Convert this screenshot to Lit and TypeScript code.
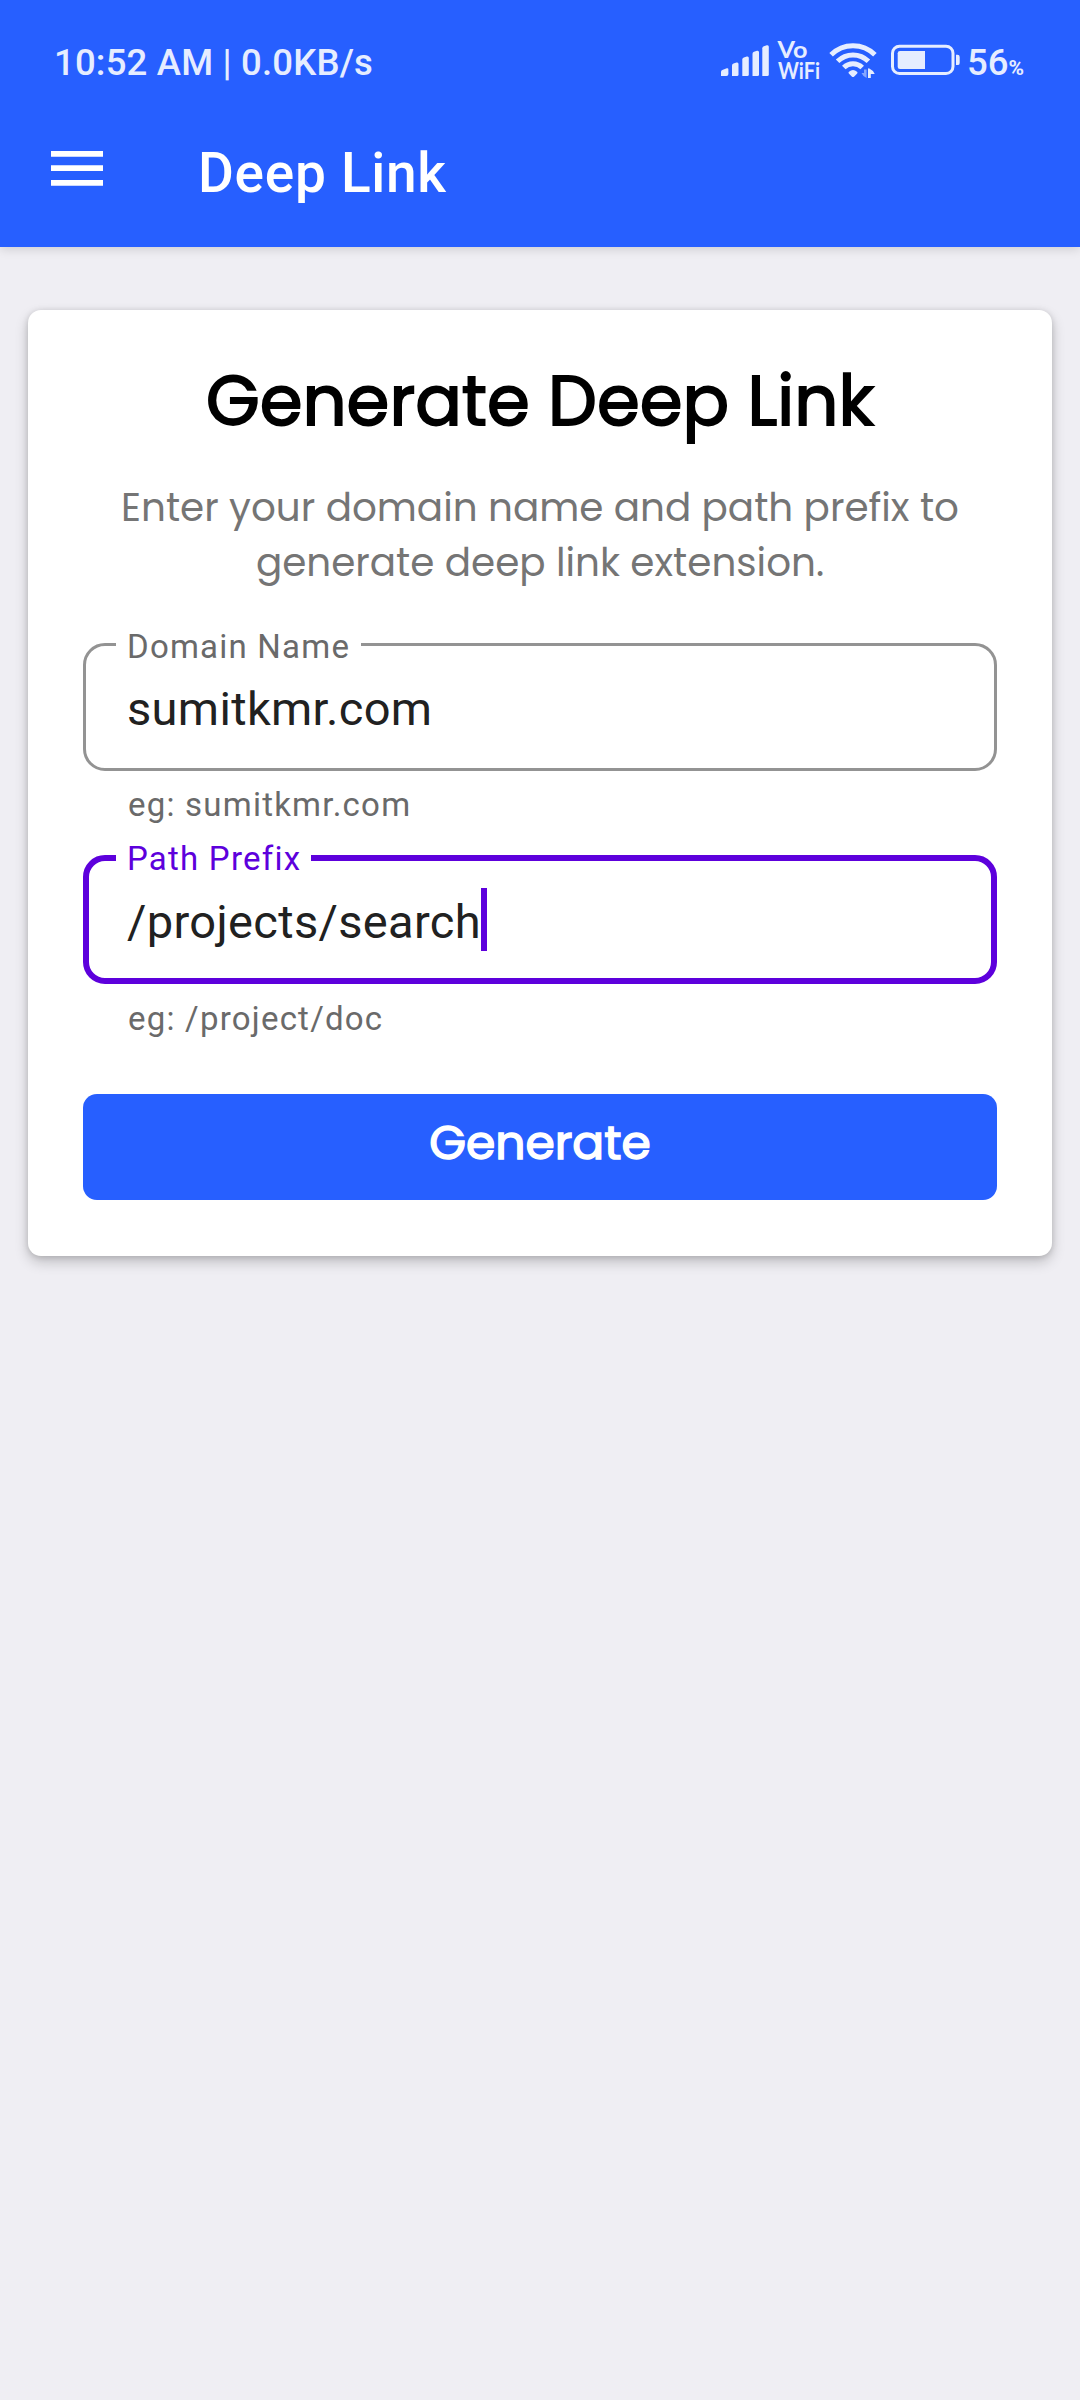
import { LitElement, html, css } from "lit";
import { customElement, property } from "lit/decorators.js";
import { classMap } from "lit/directives/class-map.js";

@customElement("status-bar")
class StatusBar extends LitElement {
  static styles = css`
    :host {
      display: flex;
      justify-content: space-between;
      height: 124px;
      padding: 0 56px 0 54px;
      color: #e6edff;
      font: 500 36.5px/125px Roboto, sans-serif;
    }
    .clock { letter-spacing: 0.18px; white-space: pre; }
    .right { display: flex; align-items: baseline; }
    .icons { display: block; align-self: flex-start; width: 247px; height: 124px; }
    .tag { font: 700 22.5px Lato, sans-serif; }
    .percent { font-size: 21px; font-weight: 700; }
  `;

  render() {
    return html`
      <span class="clock">10:52 AM | 0.0KB/s</span>
      <div class="right">
        <svg class="icons" viewBox="720 0 247 124" fill="currentColor">
          <path d="M721 76v-4q0-1.500 1.300-2l4.500-1.700q1.600-.4 1.600 1.200V74q0 2-2 2z" />
          <path d="M732 76V65.500q0-1.500 1.500-2l3-1q2-.5 2 1.500V74.500q0 1.500-1.500 1.500z" />
          <path d="M742.300 76V59.500q0-1.500 1.500-2l3-1q2-.5 2 1.500V74.500q0 1.500-1.500 1.500z" />
          <path d="M752.500 76V53.800q0-1.500 1.500-2l3-1q2-.5 2 1.500V74.500q0 1.500-1.500 1.500z" />
          <path d="M762.300 76V48.300q0-1.500 1.500-2l3-1q2-.5 2 1.500V74.500q0 1.500-1.500 1.500z" />
          <text class="tag" x="777.500" y="57.500" textLength="30" lengthAdjust="spacingAndGlyphs">Vo</text>
          <text class="tag" x="778" y="79" textLength="42" lengthAdjust="spacingAndGlyphs">WiFi</text>
          <g fill="none" stroke="currentColor" stroke-width="5">
            <path d="M831.100 54.800a31 31 0 0 1 43.800 0" />
            <path d="M837.600 61.300a21.800 21.800 0 0 1 30.800 0" />
            <path d="M843.800 67.500a13 13 0 0 1 18.400 0" />
          </g>
          <path d="M848.800 73.500q-.8-1 .2-1.700 4-3.400 8 0 1 .7.2 1.700l-3.200 3.200q-1 .8-2 0z" />
          <path opacity=".5" d="M864 69.500h2.600V78q-3.600-1.500-5.100-5h2.500z" />
          <path d="M868 78V69.300q0-1.500 1.300-.8 3.600 1.500 5.400 5.500h-3.900v4z" />
          <rect x="892.500" y="46.200" width="60.500" height="27.400" rx="7" fill="none" stroke="currentColor" stroke-width="3" />
          <path d="M900 51h25v18h-25q-2.300 0-2.300-2.300V53.300q0-2.300 2.300-2.300z" />
          <path d="M956 54.700h1.500q2.200 0 2.200 2.200v6q0 2.200-2.200 2.200H956z" />
        </svg>
        <span>56</span><span class="percent">%</span>
      </div>
    `;
  }
}

@customElement("app-header")
class AppHeader extends LitElement {
  static styles = css`
    :host {
      display: block;
      height: 247px;
      background: #275fff;
      box-shadow: 0 2px 10px rgba(0, 0, 0, 0.14);
    }
    .toolbar { display: flex; align-items: flex-start; padding-left: 51px; }
    .menu { display: block; width: 52px; height: 35px; margin-top: 27px; }
    .title {
      margin: 0 0 0 95px;
      color: #fff;
      font: 500 55px/98px Roboto, sans-serif;
      letter-spacing: 0.7px;
    }
  `;

  render() {
    return html`
      <status-bar></status-bar>
      <div class="toolbar">
        <svg class="menu" viewBox="0 0 52 35" fill="#fff">
          <path d="M0 0h52v5.700H0zM0 14.300h52v5.700H0zM0 29h52v5.700H0z" />
        </svg>
        <h1 class="title">Deep Link</h1>
      </div>
    `;
  }
}

@customElement("outlined-field")
class OutlinedField extends LitElement {
  @property() label = "";
  @property() value = "";
  @property() hint = "";
  @property({ type: Boolean }) active = false;

  static styles = css`
    :host { display: block; font-family: Roboto, sans-serif; }
    .box {
      box-sizing: border-box;
      min-width: 0;
      height: 149px;
      margin: 0;
      padding: 17px 41px 0;
      border: 3px solid #939393;
      border-radius: 22px;
    }
    .legend {
      margin-left: -11px;
      padding: 6px 11px 0 11px;
      color: #6a6a6a;
      font-size: 33px;
      line-height: 38px;
      letter-spacing: 1.22px;
    }
    .value {
      display: flex;
      align-items: center;
      color: #212121;
      font-size: 47px;
      line-height: 52px;
      letter-spacing: 0.34px;
    }
    .caret { width: 6px; height: 63px; margin: -8px 0 -3px; background: #5d00dc; }
    .hint {
      margin: 14px 44px 0 45px;
      color: #6a6a6a;
      font-size: 33px;
      line-height: 40px;
      letter-spacing: 1.22px;
    }
    .box.active { height: 146px; padding: 18px 38px 0; border: 6px solid #5d00dc; }
    .active .legend { padding-top: 2px; padding-right: 10px; color: #5d00dc; }
    .active + .hint { margin-top: 15px; }
  `;

  render() {
    return html`
      <fieldset class=${classMap({ box: true, active: this.active })}>
        <legend class="legend">${this.label}</legend>
        <div class="value">${this.value}${this.active ? html`<span class="caret"></span>` : null}</div>
      </fieldset>
      <div class="hint">${this.hint}</div>
    `;
  }
}

@customElement("app-root")
class AppRoot extends LitElement {
  static styles = css`
    :host {
      display: flow-root;
      min-height: 2400px;
      background: #efeef3;
      font-family: Poppins, Inter, sans-serif;
    }
    .card {
      display: flex;
      flex-direction: column;
      margin: 63px 28px 0;
      padding: 49px 55px 56px;
      border-radius: 13px;
      background: #fff;
      box-shadow: 0 6px 14px rgba(0, 0, 0, 0.2), 0 1px 6px rgba(0, 0, 0, 0.14);
    }
    .heading {
      margin: 0;
      font-size: 69px;
      font-weight: 400;
      line-height: 84px;
      text-align: center;
      -webkit-text-stroke: 1.8px #000;
    }
    .intro {
      margin: 37px 0 32px;
      color: #757575;
      font-size: 38.9px;
      line-height: 55px;
      text-align: center;
    }
    .second { margin-top: 13px; }
    .button {
      display: flex;
      justify-content: center;
      height: 106px;
      margin-top: 55px;
      padding: 0;
      border: 0;
      border-radius: 14px;
      background: #275fff;
      color: #fff;
      font: 400 47.2px/97px Poppins, Inter, sans-serif;
      -webkit-text-stroke: 1.5px #fff;
    }
    .button-label { height: 106px; }
  `;

  render() {
    return html`
      <app-header></app-header>
      <main class="card">
        <h2 class="heading">Generate Deep Link</h2>
        <p class="intro">Enter your domain name and path prefix to<br />generate deep link extension.</p>
        <outlined-field label="Domain Name" value="sumitkmr.com" hint="eg: sumitkmr.com"></outlined-field>
        <outlined-field class="second" label="Path Prefix" value="/projects/search" hint="eg: /project/doc" active></outlined-field>
        <button class="button" type="button"><span class="button-label">Generate</span></button>
      </main>
    `;
  }
}
